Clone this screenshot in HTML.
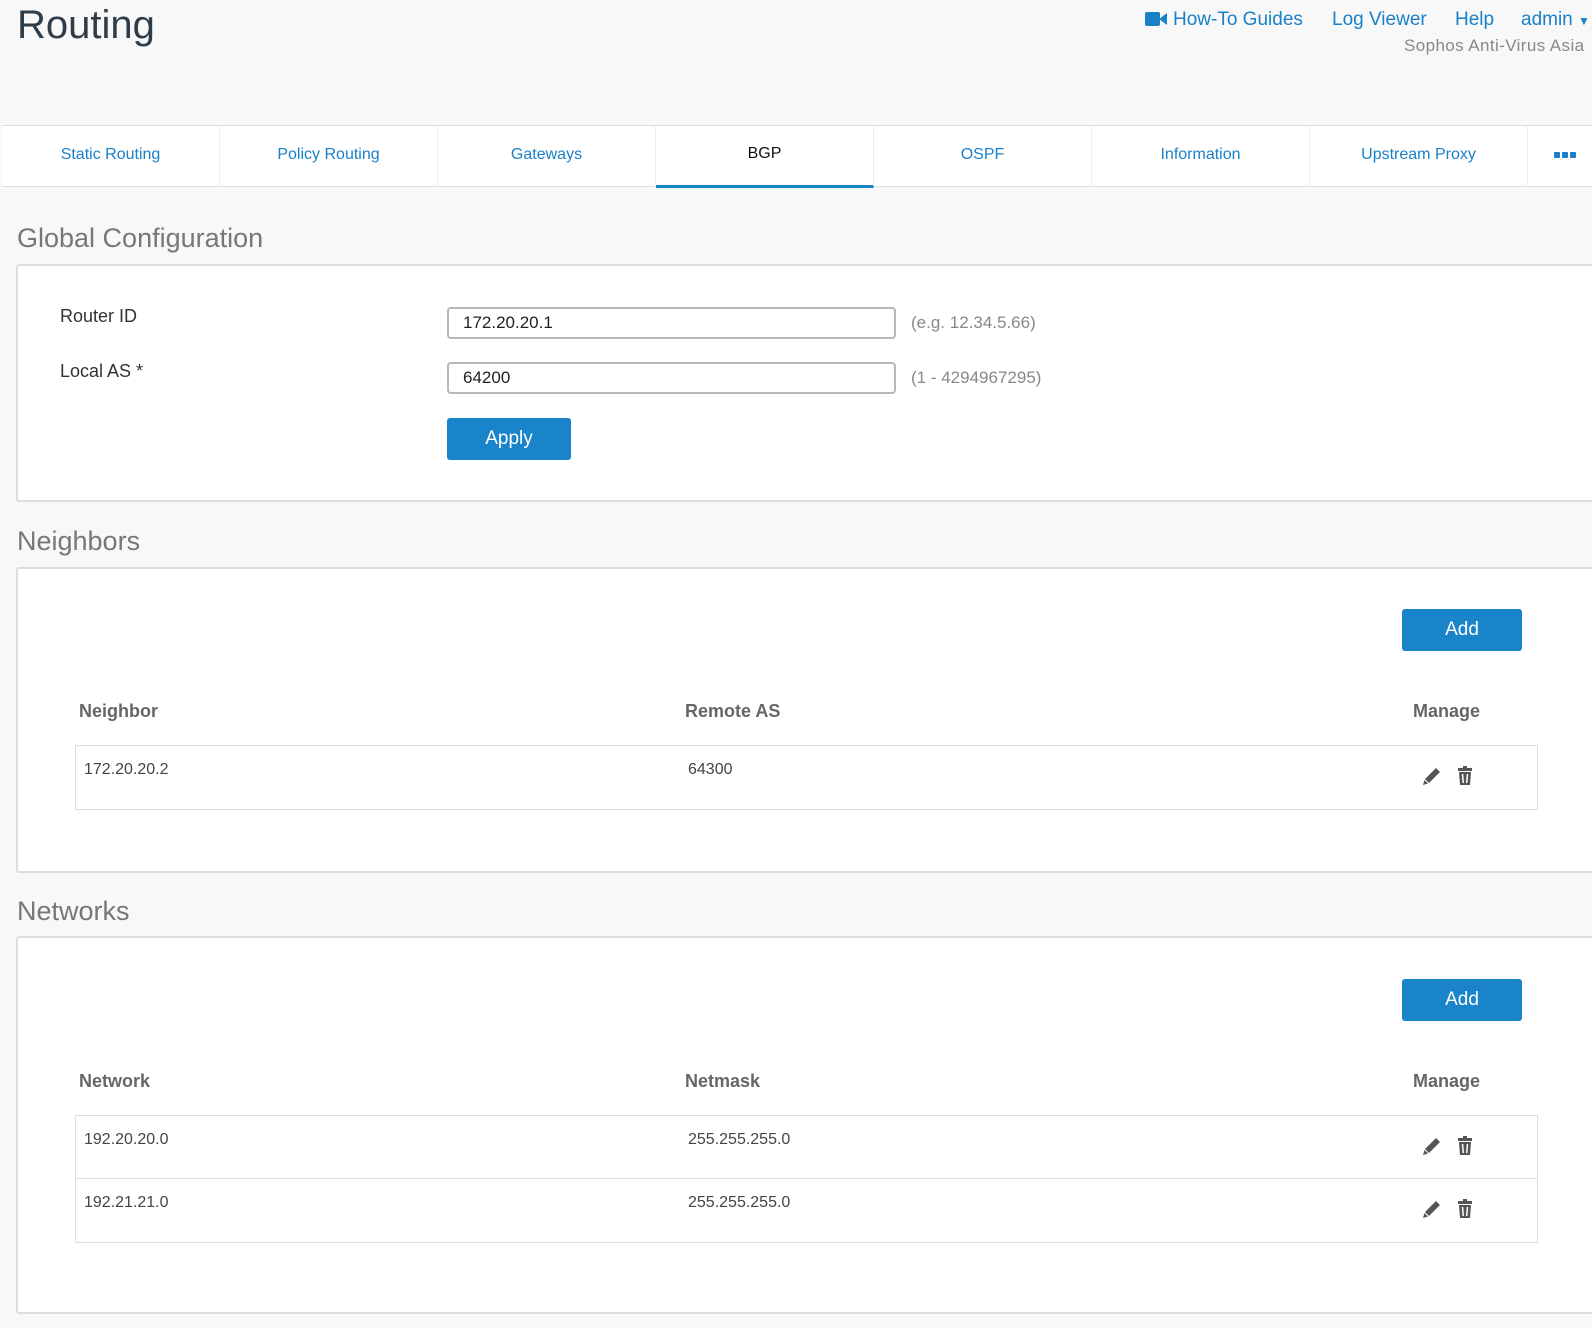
<!DOCTYPE html>
<html><head><meta charset="utf-8"><style>
*{box-sizing:border-box;margin:0;padding:0}
body{width:1592px;height:1328px;overflow:hidden;background:#f8f8f8;font-family:"Liberation Sans",sans-serif;position:relative;color:#333}
.a{position:absolute;white-space:nowrap}
.lnk{color:#1a80c8;font-size:19px}
.tabs{position:absolute;left:2px;top:125px;width:1600px;height:62px;background:#fff;border-top:1px solid #ddd;border-bottom:1px solid #ddd}
.tab{position:absolute;top:0;height:61px;width:218px;border-right:1px solid #eee;text-align:center;line-height:58px;font-size:16px;color:#1a80c8}
.h{position:absolute;left:17px;font-size:27px;color:#777}
.box{position:absolute;left:16px;width:1600px;background:#fff;border:2px solid #ddd;border-radius:3px}
.lbl{font-size:18px;color:#333}
.inp{position:absolute;left:447px;width:449px;height:32px;border:2px solid #b5b8bb;border-radius:4px;background:#fff;font-size:17px;line-height:28px;padding-left:14px;color:#222}
.hint{font-size:17px;color:#888}
.btn{position:absolute;background:#1a84cb;color:#fff;border-radius:3px;text-align:center;font-size:19px}
.th{font-size:18px;font-weight:bold;color:#666}
.tbl{position:absolute;left:75px;width:1463px;border:1px solid #ddd;background:#fff}
.row{height:63px;border-bottom:1px solid #ddd;position:relative}
.row:last-child{border-bottom:none}
.row span{position:absolute;top:15px;font-size:16px;color:#444}
.ic{position:absolute;top:20px}
</style></head><body>
<div class="a" style="left:17px;top:3px;font-size:40px;color:#2f3d48">Routing</div>
<svg class="a" style="left:1145px;top:12px" width="22" height="14" viewBox="0 0 22 14"><rect x="0" y="0" width="15" height="14" rx="2" fill="#1a80c8"/><path d="M14 7 L22 1 V13Z" fill="#1a80c8"/></svg>
<div class="a lnk" style="left:1173px;top:9px">How-To Guides</div>
<div class="a lnk" style="left:1332px;top:9px">Log Viewer</div>
<div class="a lnk" style="left:1455px;top:9px">Help</div>
<div class="a lnk" style="left:1521px;top:9px">admin <span style="font-size:12px">▼</span></div>
<div class="a" style="left:1404px;top:36px;font-size:17px;color:#888;letter-spacing:0.4px">Sophos Anti-Virus Asia</div>

<div class="tabs">
<div class="tab" style="left:0">Static Routing</div>
<div class="tab" style="left:218px">Policy Routing</div>
<div class="tab" style="left:436px">Gateways</div>
<div class="tab" style="left:654px;color:#111;border-bottom:3px solid #1a80c8;height:62px;line-height:56px">BGP</div>
<div class="tab" style="left:872px">OSPF</div>
<div class="tab" style="left:1090px">Information</div>
<div class="tab" style="left:1308px">Upstream Proxy</div>
<div class="tab" style="left:1526px;width:70px;border:none">
<svg style="position:absolute;left:26px;top:26px" width="22" height="6"><rect x="0" y="0" width="6" height="6" rx="1" fill="#1a80c8"/><rect x="8" y="0" width="6" height="6" rx="1" fill="#1a80c8"/><rect x="16" y="0" width="6" height="6" rx="1" fill="#1a80c8"/></svg></div>
</div>

<div class="h" style="top:223px">Global Configuration</div>
<div class="box" style="top:264px;height:238px"></div>
<div class="a lbl" style="left:60px;top:306px">Router ID</div>
<div class="a lbl" style="left:60px;top:361px">Local AS *</div>
<div class="inp" style="top:307px">172.20.20.1</div>
<div class="inp" style="top:362px">64200</div>
<div class="a hint" style="left:911px;top:313px">(e.g. 12.34.5.66)</div>
<div class="a hint" style="left:911px;top:368px">(1 - 4294967295)</div>
<div class="btn" style="left:447px;top:418px;width:124px;height:42px;line-height:42px">Apply</div>

<div class="h" style="top:526px">Neighbors</div>
<div class="box" style="top:567px;height:306px"></div>
<div class="btn" style="left:1402px;top:609px;width:120px;height:42px;line-height:42px">Add</div>
<div class="a th" style="left:79px;top:701px">Neighbor</div>
<div class="a th" style="left:685px;top:701px">Remote AS</div>
<div class="a th" style="left:1413px;top:701px">Manage</div>
<div class="tbl" style="top:745px">
<div class="row"><span style="left:8px">172.20.20.2</span><span style="left:612px">64300</span>
<svg class="ic" style="left:1346px" width="20" height="20" viewBox="0 0 20 20"><path d="M14 2 L18 6 L7 17 L3 13Z" fill="#555"/><path d="M2.5 14 L6 17.5 L1 19Z" fill="#555"/></svg>
<svg class="ic" style="left:1381px" width="16" height="20" viewBox="0 0 16 20"><rect x="1" y="2" width="14" height="3" fill="#555"/><rect x="6" y="0" width="4" height="2" fill="#555"/><path d="M2 6 H14 L13 19 H3Z" fill="#555"/><path d="M5.5 8 L6.3 17 M10.5 8 L9.7 17" stroke="#fff" stroke-width="1.5"/></svg>
</div></div>

<div class="h" style="top:896px">Networks</div>
<div class="box" style="top:936px;height:378px"></div>
<div class="btn" style="left:1402px;top:979px;width:120px;height:42px;line-height:42px">Add</div>
<div class="a th" style="left:79px;top:1071px">Network</div>
<div class="a th" style="left:685px;top:1071px">Netmask</div>
<div class="a th" style="left:1413px;top:1071px">Manage</div>
<div class="tbl" style="top:1115px">
<div class="row"><span style="left:8px">192.20.20.0</span><span style="left:612px">255.255.255.0</span>
<svg class="ic" style="left:1346px" width="20" height="20" viewBox="0 0 20 20"><path d="M14 2 L18 6 L7 17 L3 13Z" fill="#555"/><path d="M2.5 14 L6 17.5 L1 19Z" fill="#555"/></svg>
<svg class="ic" style="left:1381px" width="16" height="20" viewBox="0 0 16 20"><rect x="1" y="2" width="14" height="3" fill="#555"/><rect x="6" y="0" width="4" height="2" fill="#555"/><path d="M2 6 H14 L13 19 H3Z" fill="#555"/><path d="M5.5 8 L6.3 17 M10.5 8 L9.7 17" stroke="#fff" stroke-width="1.5"/></svg>
</div>
<div class="row"><span style="left:8px">192.21.21.0</span><span style="left:612px">255.255.255.0</span>
<svg class="ic" style="left:1346px" width="20" height="20" viewBox="0 0 20 20"><path d="M14 2 L18 6 L7 17 L3 13Z" fill="#555"/><path d="M2.5 14 L6 17.5 L1 19Z" fill="#555"/></svg>
<svg class="ic" style="left:1381px" width="16" height="20" viewBox="0 0 16 20"><rect x="1" y="2" width="14" height="3" fill="#555"/><rect x="6" y="0" width="4" height="2" fill="#555"/><path d="M2 6 H14 L13 19 H3Z" fill="#555"/><path d="M5.5 8 L6.3 17 M10.5 8 L9.7 17" stroke="#fff" stroke-width="1.5"/></svg>
</div></div>
</body></html>
